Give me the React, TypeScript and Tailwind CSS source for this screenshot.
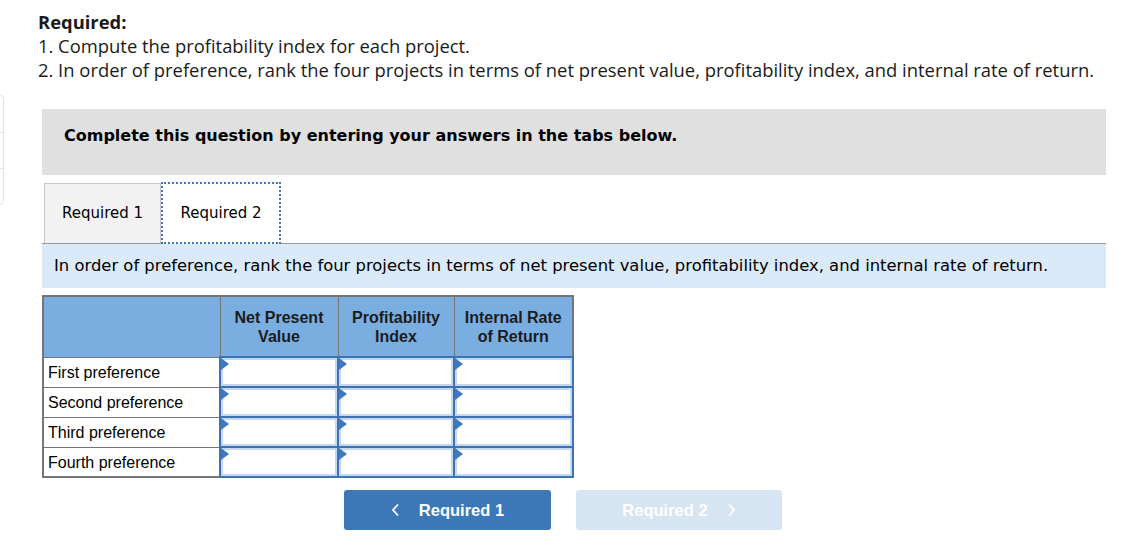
import React from "react";

const rows = ["First preference", "Second preference", "Third preference", "Fourth preference"];

function InputCell() {
  return (
    <td className="p-0 border-2 border-[#3d73b5] relative h-[30px]">
      <div className="absolute inset-0 border-2 border-[#c4d9ef]" />
      <svg className="absolute left-0 top-0" width="8" height="12" viewBox="0 0 8 12">
        <polygon points="0,0 8,6 0,12" fill="#3d78c0" />
      </svg>
    </td>
  );
}

const verdana = "font-['DejaVu_Sans',Verdana,sans-serif]";

export default function App() {
  return (
    <div className="relative w-[1139px] h-[550px] bg-white overflow-hidden">
      <div className="absolute left-[-8px] top-[95px] w-[12px] h-[110px] border border-[#e4e4e4] rounded-sm">
        <div className="h-[37px] border-b border-[#e4e4e4]" />
        <div className="h-[36px] border-b border-[#e4e4e4]" />
      </div>
      <div className="pl-[38px] pt-[10px] text-[#1a1a1a] text-[18.4px] leading-[24px] font-['Open_Sans',sans-serif]">
        <div className="font-bold">Required:</div>
        <div>1. Compute the profitability index for each project.</div>
        <div>2. In order of preference, rank the four projects in terms of net present value, profitability index, and internal rate of return.</div>
      </div>
      <div className="ml-[42px] mt-[27px] w-[1064px]">
        <div className={`h-[66px] bg-[#e0e0e0] pt-[17px] pl-[22px] text-[16px] leading-[20px] font-bold text-black ${verdana}`}>
          Complete this question by entering your answers in the tabs below.
        </div>
        <div className={`mt-[9px] flex items-end h-[60px] pl-[2px] border-b border-[#9a9a9a] ${verdana}`}>
          <div className="w-[117px] h-[60px] bg-[#f2f2f2] border border-b-0 border-[#c8c8c8] flex items-center justify-center text-[15px] text-black">Required 1</div>
          <div className="w-[120px] h-[62px] -mb-px border-2 border-dotted border-[#3d78c0] bg-white flex items-center justify-center text-[15px] text-black relative z-10">Required 2</div>
        </div>
        <div className={`h-[44px] bg-[#dbeaf8] flex items-center pl-[12px] text-[16.4px] text-black ${verdana}`}>
          In order of preference, rank the four projects in terms of net present value, profitability index, and internal rate of return.
        </div>
        <table className="mt-[7px] border-collapse border-2 border-[#757575] text-[16px] text-black font-['Liberation_Sans',Arial,sans-serif]">
          <thead>
            <tr className="bg-[#7aaee1] h-[61px]">
              <th className="w-[177px] border border-[#757575] p-0"></th>
              <th className="w-[118px] border border-[#757575] p-0 font-bold leading-[19px] text-[#1c1c1c]">Net Present<br />Value</th>
              <th className="w-[116px] border border-[#757575] p-0 font-bold leading-[19px] text-[#1c1c1c]">Profitability<br />Index</th>
              <th className="w-[119px] border border-[#757575] p-0 font-bold leading-[19px] text-[#1c1c1c]">Internal Rate<br />of Return</th>
            </tr>
          </thead>
          <tbody>
            {rows.map((r) => (
              <tr key={r} className="h-[30px]">
                <td className="border border-[#757575] pl-[4px] pt-[2px] text-[16px] leading-[20px]">{r}</td>
                <InputCell />
                <InputCell />
                <InputCell />
              </tr>
            ))}
          </tbody>
        </table>
        <div className="mt-[12px] flex gap-[25px] pl-[302px] font-['Liberation_Sans',Arial,sans-serif]">
          <button className="w-[207px] h-[40px] rounded-[3px] bg-[#3c78b8] text-white font-bold text-[16.5px] flex items-center justify-center gap-[19px]">
            <svg width="9" height="14" viewBox="0 0 9 14"><polyline points="7,1.5 2,7 7,12.5" fill="none" stroke="white" strokeWidth="1.8" /></svg>
            <span>Required 1</span>
          </button>
          <button className="w-[206px] h-[40px] rounded-[3px] bg-[#d7e4f1] text-white font-bold text-[16.5px] flex items-center justify-center gap-[19px]">
            <span>Required 2</span>
            <svg width="9" height="14" viewBox="0 0 9 14"><polyline points="2,1.5 7,7 2,12.5" fill="none" stroke="white" strokeWidth="1.8" /></svg>
          </button>
        </div>
      </div>
    </div>
  );
}
